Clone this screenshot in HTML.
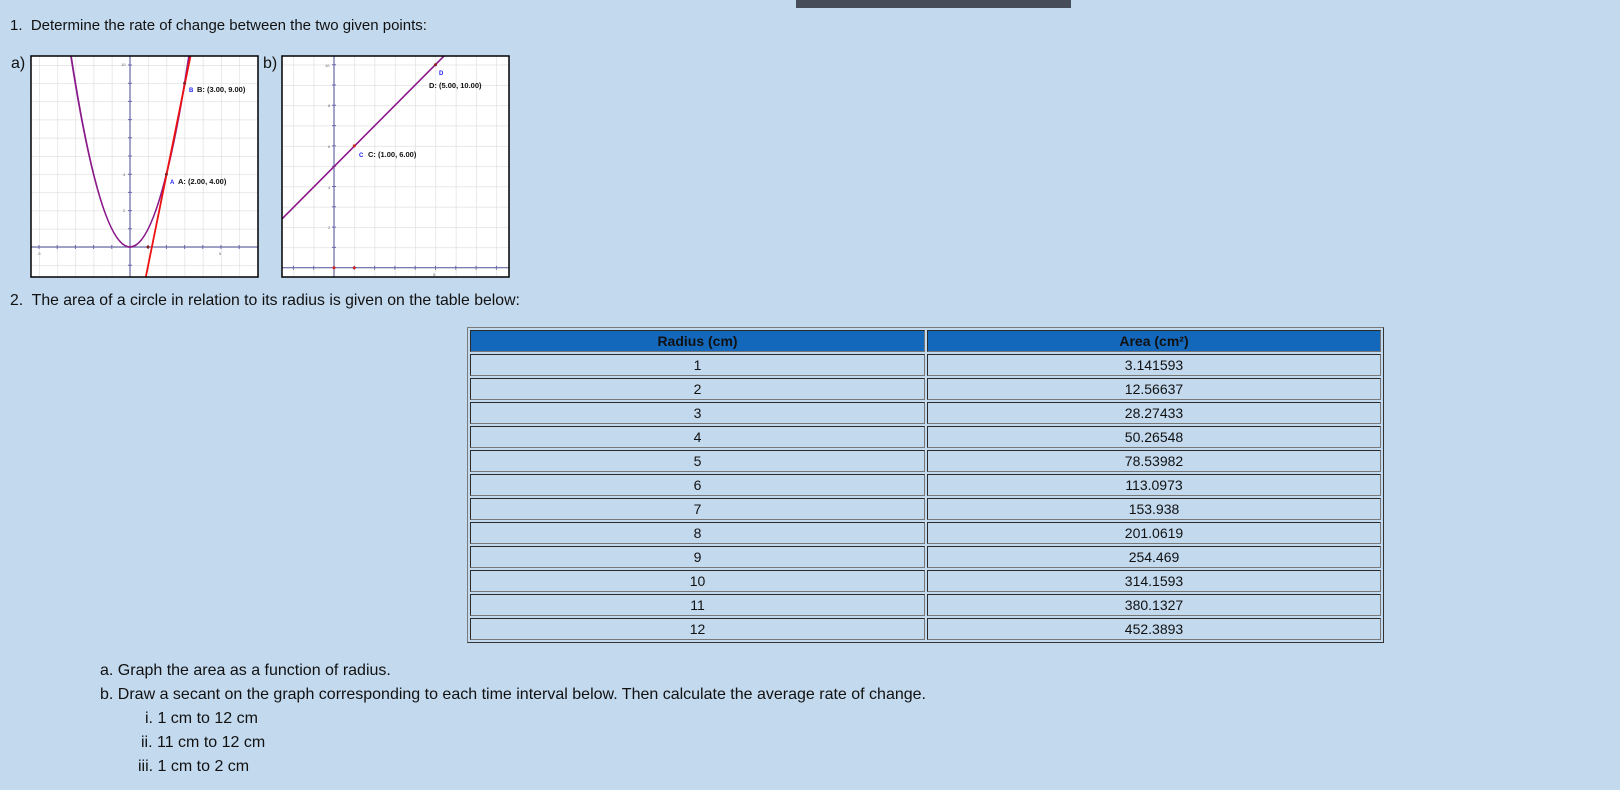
<!DOCTYPE html>
<html><head><meta charset="utf-8"><style>
html,body{margin:0;padding:0;}
body{width:1620px;height:790px;background:#c3d9ee;font-family:"Liberation Sans",Arial,sans-serif;color:#111;position:relative;overflow:hidden;}
.t{position:absolute;font-size:15px;white-space:nowrap;line-height:18px;}
.u{font-size:16px;}
.bar{position:absolute;left:796px;top:0;width:275px;height:8px;background:#474d58;}
table{position:absolute;left:467px;top:327px;border-collapse:separate;border-spacing:2px;border:1px solid;border-color:#7a7a7a #333 #333 #7a7a7a;}
td,th{border:1px solid;border-color:#2a2a2a #777 #777 #2a2a2a;height:20px;padding:0;text-align:center;font-size:14px;font-weight:normal;line-height:20px;}
th{background:#1468bb;font-weight:bold;color:#111;}
td.a{width:453px;} td.b{width:452px;}
</style></head><body>
<div class="bar"></div>
<div class="t" style="left:10px;top:17px;">1.&nbsp; Determine the rate of change between the two given points:</div>
<div class="t" style="left:11px;top:55px;font-size:16px;">a)</div>
<div class="t" style="left:263px;top:55px;font-size:16px;">b)</div>
<svg style="position:absolute;left:0;top:0" width="620" height="290">
<defs>
<pattern id="ga" x="130" y="247" width="18.2" height="18.2" patternUnits="userSpaceOnUse">
<rect width="18.2" height="18.2" fill="#fff"/>
<path d="M0 0V18.2M0 0H18.2" stroke="#dcdcdc" stroke-width="1.2"/>
</pattern>
<pattern id="gb" x="334" y="267.7" width="20.3" height="20.3" patternUnits="userSpaceOnUse">
<rect width="20.3" height="20.3" fill="#fff"/>
<path d="M0 0V20.3M0 0H20.3" stroke="#dcdcdc" stroke-width="1.2"/>
</pattern>
<clipPath id="ca"><rect x="31" y="56" width="227" height="221"/></clipPath>
<clipPath id="cb"><rect x="282" y="56" width="227" height="221"/></clipPath>
</defs>
<g clip-path="url(#ca)">
<rect x="31" y="56" width="227" height="221" fill="url(#ga)"/>
<path d="M31 247H258M130 56V277" stroke="#6a6aa8" stroke-width="1.2"/>
<path d="M39 245v4M57.2 245v4M75.4 245v4M93.6 245v4M111.8 245v4M148.2 245v4M166.4 245v4M184.6 245v4M202.8 245v4M221 245v4M239.2 245v4M128 265.2h4M128 228.8h4M128 210.6h4M128 192.4h4M128 174.2h4M128 156h4M128 137.8h4M128 119.6h4M128 101.4h4M128 83.2h4M128 65h4" stroke="#6a6aa8" stroke-width="1"/>
<path d="M71 56 Q130 438 189 56" stroke="#8a1a8a" stroke-width="1.8" fill="none"/>
<path d="M145.8 277L190.5 56" stroke="#ee1111" stroke-width="1.8"/>
<circle cx="166.4" cy="174.2" r="1.5" fill="#822"/><circle cx="184.6" cy="83.2" r="1.5" fill="#822"/><circle cx="148" cy="247" r="1.5" fill="#822"/>
<g font-family="Liberation Sans,Arial" font-size="7.5" font-weight="bold">
<text x="189" y="92" fill="#22f" font-size="6">B</text><text x="197" y="92" fill="#111">B: (3.00, 9.00)</text>
<text x="170" y="184" fill="#22f" font-size="6">A</text><text x="178" y="184" fill="#111">A: (2.00, 4.00)</text>
</g>
<g font-family="Liberation Sans,Arial" font-size="4" fill="#666"><text x="121" y="66">10</text><text x="37" y="255">-5</text><text x="219" y="255">5</text><text x="123" y="212">2</text><text x="123" y="176">4</text></g>
</g>
<rect x="31" y="56" width="227" height="221" fill="none" stroke="#000" stroke-width="1.5"/>
<g clip-path="url(#cb)">
<rect x="282" y="56" width="227" height="221" fill="url(#gb)"/>
<path d="M282 267.7H509M334 56V277" stroke="#6a6aa8" stroke-width="1.2"/>
<path d="M293.4 265.7v4M313.7 265.7v4M354.3 265.7v4M374.6 265.7v4M394.9 265.7v4M415.2 265.7v4M435.5 265.7v4M455.8 265.7v4M476.1 265.7v4M496.4 265.7v4M332 247.4h4M332 227.1h4M332 206.8h4M332 186.5h4M332 166.2h4M332 145.9h4M332 125.6h4M332 105.3h4M332 85h4M332 64.7h4" stroke="#6a6aa8" stroke-width="1"/>
<path d="M282 218.9L444 56" stroke="#8a1a8a" stroke-width="1.6"/>
<circle cx="354.3" cy="145.9" r="1.5" fill="#c22"/><circle cx="435.5" cy="64.7" r="1.5" fill="#822"/><circle cx="334" cy="267.7" r="1.5" fill="#c22"/><circle cx="354.3" cy="267.7" r="1.5" fill="#c22"/>
<g font-family="Liberation Sans,Arial" font-size="7.5" font-weight="bold">
<text x="439" y="75" fill="#22f" font-size="6">D</text><text x="429" y="88" fill="#111">D: (5.00, 10.00)</text>
<text x="359" y="157" fill="#22f" font-size="6">C</text><text x="368" y="157" fill="#111">C: (1.00, 6.00)</text>
</g>
<g font-family="Liberation Sans,Arial" font-size="4" fill="#666"><text x="325" y="67">10</text><text x="433" y="276">5</text><text x="328" y="107">8</text><text x="328" y="148">6</text><text x="328" y="189">4</text><text x="328" y="229">2</text></g>
</g>
<rect x="282" y="56" width="227" height="221" fill="none" stroke="#000" stroke-width="1.5"/>
</svg>
<div class="t" style="left:10px;top:292px;font-size:15.8px;">2.&nbsp; The area of a circle in relation to its radius is given on the table below:</div>
<table>
<tr><th class="a" style="width:453px">Radius (cm)</th><th style="width:452px">Area (cm²)</th></tr>
<tr><td class="a">1</td><td class="b">3.141593</td></tr>
<tr><td class="a">2</td><td class="b">12.56637</td></tr>
<tr><td class="a">3</td><td class="b">28.27433</td></tr>
<tr><td class="a">4</td><td class="b">50.26548</td></tr>
<tr><td class="a">5</td><td class="b">78.53982</td></tr>
<tr><td class="a">6</td><td class="b">113.0973</td></tr>
<tr><td class="a">7</td><td class="b">153.938</td></tr>
<tr><td class="a">8</td><td class="b">201.0619</td></tr>
<tr><td class="a">9</td><td class="b">254.469</td></tr>
<tr><td class="a">10</td><td class="b">314.1593</td></tr>
<tr><td class="a">11</td><td class="b">380.1327</td></tr>
<tr><td class="a">12</td><td class="b">452.3893</td></tr>
</table>
<div class="t u" style="left:100px;top:662px;">a. Graph the area as a function of radius.</div>
<div class="t u" style="left:100px;top:686px;">b. Draw a secant on the graph corresponding to each time interval below. Then calculate the average rate of change.</div>
<div class="t u" style="left:145px;top:710px;">i. 1 cm to 12 cm</div>
<div class="t u" style="left:141px;top:734px;">ii. 11 cm to 12 cm</div>
<div class="t u" style="left:138px;top:758px;">iii. 1 cm to 2 cm</div>
</body></html>
